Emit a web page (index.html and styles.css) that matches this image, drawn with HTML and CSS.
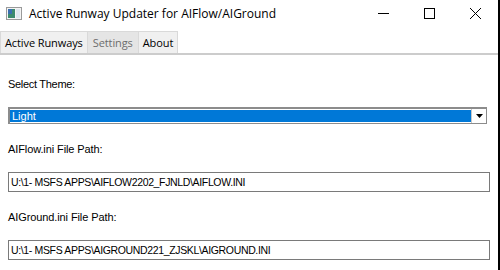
FILE: index.html
```html
<!DOCTYPE html>
<html>
<head>
<meta charset="utf-8">
<link rel="stylesheet" href="styles.css">
</head>
<body>
<div class="window">
  <div class="titlebar">
    <svg class="appicon" width="16" height="13" viewBox="0 0 16 13">
      <rect x="0.5" y="0.5" width="15" height="12" fill="#f4f4f4" stroke="#9a9a9a"/>
      <rect x="2" y="2" width="7" height="9" fill="#3c8a6e"/>
      <rect x="2" y="2" width="4" height="5" fill="#3a6fb0"/>
      <rect x="10" y="2" width="4" height="9" fill="#dfe7ef"/>
    </svg>
    <div class="title">Active Runway Updater for AIFlow/AIGround</div>
    <div class="controls">
      <svg class="ctl" width="46" height="30" viewBox="0 0 46 30"><line x1="18" y1="14.5" x2="29" y2="14.5" stroke="#000" stroke-width="1"/></svg>
      <svg class="ctl" width="46" height="30" viewBox="0 0 46 30"><rect x="18.5" y="9.5" width="10" height="10" fill="none" stroke="#000" stroke-width="1"/></svg>
      <svg class="ctl" width="46" height="30" viewBox="0 0 46 30"><path d="M18 9 L29 20 M29 9 L18 20" stroke="#000" stroke-width="1"/></svg>
    </div>
  </div>
  <div class="tabs">
    <div class="tab">Active Runways</div>
    <div class="tab tab-active">Settings</div>
    <div class="tab">About</div>
  </div>
  <div class="content">
    <div class="label first">Select Theme:</div>
    <div class="select">
      <div class="select-value">Light</div>
      <div class="select-btn"><svg width="7" height="4" viewBox="0 0 7 4"><path d="M0 0 H7 L3.5 4 Z" fill="#000"/></svg></div>
    </div>
    <div class="label">AIFlow.ini File Path:</div>
    <div class="textbox">U:\1- MSFS APPS\AIFLOW2202_FJNLD\AIFLOW.INI</div>
    <div class="label">AIGround.ini File Path:</div>
    <div class="textbox">U:\1- MSFS APPS\AIGROUND221_ZJSKL\AIGROUND.INI</div>
  </div>
</div>
</body>
</html>
```
FILE: styles.css
```css
* { box-sizing: border-box; }
html, body { margin: 0; padding: 0; background: #fff; }
.window {
  width: 500px;
  height: 270px;
  border-right: 2px solid #000;
  background: #fff;
  overflow: hidden;
}
.titlebar {
  height: 30px;
  display: flex;
  align-items: center;
  font-family: "Open Sans", "Noto Sans", sans-serif;
  font-size: 12px;
  color: #000;
}
.appicon { margin-left: 6px; margin-right: 7px; margin-top: -3px; }
.title { flex: 1; margin-top: -3px; }
.controls { display: flex; margin-top: -2px; }
.ctl { display: block; }
.tabs {
  display: flex;
  height: 25px;
  border-bottom: 2px solid #cccccc;
  font-family: "Open Sans", "Noto Sans", sans-serif;
  font-size: 11px;
  letter-spacing: -0.1px;
}
.tab {
  background: #f0f0f0;
  border: 1px solid #d9d9d9;
  border-bottom: none;
  padding: 0 4px;
  line-height: 22px;
  margin-top: 1px;
  margin-right: -1px;
  color: #000;
}
.tab-active {
  background: #e5e5e5;
  color: #6d6d6d;
  padding: 0 5px;
}
.content {
  padding: 0 8px 0 8px;
  font-family: "Liberation Sans", Arial, sans-serif;
  font-size: 11px;
  color: #000;
}
.label { line-height: 13px; margin-top: 19px; margin-bottom: 16px; letter-spacing: -0.1px; }
.label.first { margin-top: 23px; letter-spacing: -0.3px; }
.select {
  display: flex;
  height: 17px;
  margin-right: 3px;
  border-top: 2px solid #8c8c8c;
  border-left: 2px solid #8c8c8c;
  border-right: 1px solid #8c8c8c;
  border-bottom: 1px solid #8c8c8c;
  background: #fff;
}
.select-value {
  flex: 1;
  background: #0078d7;
  color: #fff;
  line-height: 12px;
  padding-left: 2px;
  margin: 1px 0 1px 0;
}
.select-btn {
  width: 15px;
  display: flex;
  align-items: center;
  justify-content: center;
  background: #fff;
  border-left: 1px solid #c8c8c8;
}
.textbox {
  height: 20px;
  margin-top: 1px;
  border: 1px solid #7a7a7a;
  line-height: 18px;
  padding-left: 2px;
  white-space: nowrap;
  font-size: 10.5px;
  letter-spacing: -0.35px;
}
```
